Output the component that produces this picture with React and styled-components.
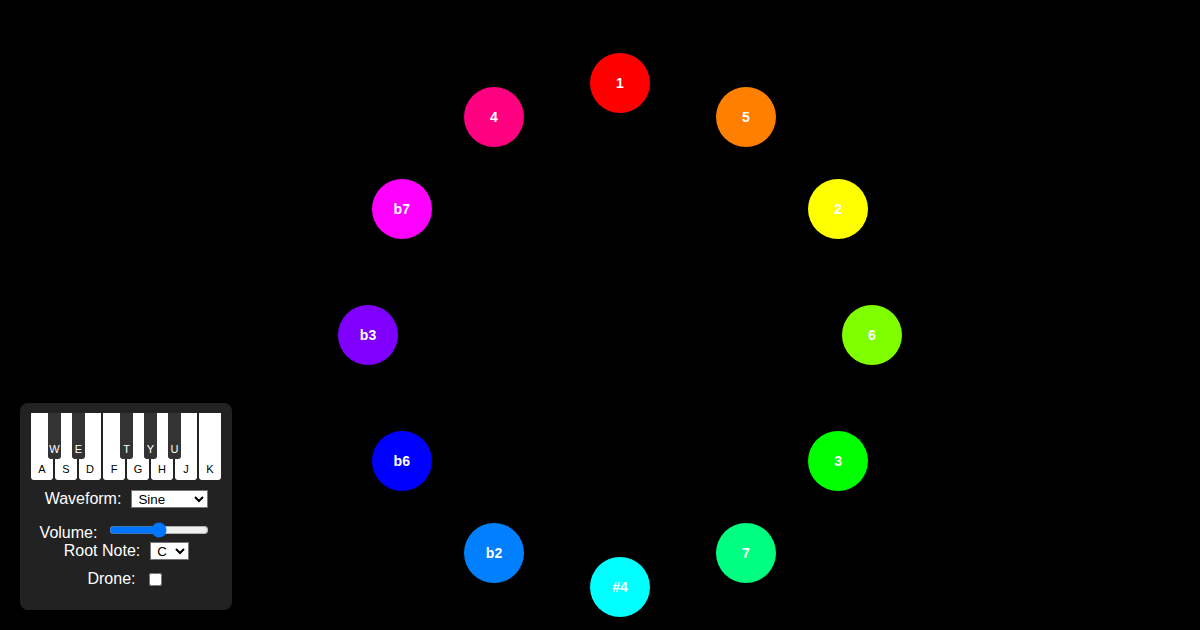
import React, { useState } from "react";
import styled, { createGlobalStyle } from "styled-components";

const GlobalStyle = createGlobalStyle`
  html, body {
    margin: 0;
    padding: 0;
    background: #000;
    font-family: "Liberation Sans", Arial, sans-serif;
    overflow: hidden;
  }
`;

const RADIUS = 252;
const SIZE = 60;

const degrees = [
  { label: "1", color: "#ff0000" },
  { label: "5", color: "#ff8000" },
  { label: "2", color: "#ffff00" },
  { label: "6", color: "#80ff00" },
  { label: "3", color: "#00ff00" },
  { label: "7", color: "#00ff80" },
  { label: "#4", color: "#00ffff" },
  { label: "b2", color: "#0080ff" },
  { label: "b6", color: "#0000ff" },
  { label: "b3", color: "#8000ff" },
  { label: "b7", color: "#ff00ff" },
  { label: "4", color: "#ff0080" },
];

const whiteKeys = ["A", "S", "D", "F", "G", "H", "J", "K"];
const blackKeys = [
  { label: "W", after: 0 },
  { label: "E", after: 1 },
  { label: "T", after: 3 },
  { label: "Y", after: 4 },
  { label: "U", after: 5 },
];

export default function App() {
  const [volume, setVolume] = useState(50);
  const [wave, setWave] = useState("sine");
  const [root, setRoot] = useState("C");
  const [drone, setDrone] = useState(false);

  return (
    <>
      <GlobalStyle />
      <Stage>
        <Wheel>
          {degrees.map((d, i) => {
            const a = (i * 30 * Math.PI) / 180;
            const x = RADIUS + RADIUS * Math.sin(a);
            const y = RADIUS - RADIUS * Math.cos(a);
            return (
              <Note key={d.label} $color={d.color} style={{ left: x, top: y }}>
                {d.label}
              </Note>
            );
          })}
        </Wheel>
      </Stage>

      <Panel>
        <Keyboard>
          {whiteKeys.map((k) => (
            <WhiteKey key={k}>{k}</WhiteKey>
          ))}
          {blackKeys.map((k) => (
            <BlackKey key={k.label} style={{ left: (k.after + 1) * 24 - 7 }}>
              {k.label}
            </BlackKey>
          ))}
        </Keyboard>

        <Row $top={10} $height={18}>
          <Label>Waveform:</Label>
          <Select $width={77} value={wave} onChange={(e) => setWave(e.target.value)}>
            <option value="sine">Sine</option>
            <option value="square">Square</option>
            <option value="sawtooth">Sawtooth</option>
            <option value="triangle">Triangle</option>
          </Select>
        </Row>

        <Row $top={6} $height={28} $align="flex-end" $gap={12} $shift={-2}>
          <Label>Volume:</Label>
          <Slider
            type="range"
            min="0"
            max="100"
            value={volume}
            onChange={(e) => setVolume(e.target.value)}
          />
        </Row>

        <Row $top={0} $height={18}>
          <Label>Root Note:</Label>
          <Select $width={39} value={root} onChange={(e) => setRoot(e.target.value)}>
            {["C", "C#", "D", "D#", "E", "F", "F#", "G", "G#", "A", "A#", "B"].map((n) => (
              <option key={n}>{n}</option>
            ))}
          </Select>
        </Row>

        <Row $top={10} $height={18} $gap={13} $shift={-2}>
          <Label>Drone:</Label>
          <Check type="checkbox" checked={drone} onChange={(e) => setDrone(e.target.checked)} />
        </Row>
      </Panel>
    </>
  );
}

const Stage = styled.div`
  width: 1200px;
  height: 630px;
  box-sizing: border-box;
  padding: 40px 0 0 40px;
  display: flex;
  align-items: center;
  justify-content: center;
`;

const Wheel = styled.div`
  position: relative;
  width: ${RADIUS * 2 + SIZE}px;
  height: ${RADIUS * 2 + SIZE}px;
`;

const Note = styled.div`
  position: absolute;
  width: ${SIZE}px;
  height: ${SIZE}px;
  border-radius: 50%;
  background: ${(p) => p.$color};
  color: #fff;
  font-size: 14px;
  font-weight: bold;
  display: flex;
  align-items: center;
  justify-content: center;
`;

const Panel = styled.div`
  position: fixed;
  left: 20px;
  bottom: 20px;
  width: 212px;
  box-sizing: border-box;
  padding: 10px 10px 22px 11px;
  background: #222;
  border-radius: 8px;
  color: #fff;
  display: flex;
  flex-direction: column;
`;

const Keyboard = styled.div`
  position: relative;
  display: flex;
  gap: 2px;
  width: 190px;
  height: 67px;
`;

const WhiteKey = styled.div`
  width: 22px;
  height: 67px;
  background: #fff;
  color: #000;
  border-radius: 0 0 3px 3px;
  font-size: 11px;
  display: flex;
  align-items: flex-end;
  justify-content: center;
  padding-bottom: 5px;
  box-sizing: border-box;
`;

const BlackKey = styled.div`
  position: absolute;
  top: 0;
  width: 13px;
  height: 46px;
  background: #333;
  color: #fff;
  border-radius: 0 0 3px 3px;
  font-size: 11px;
  display: flex;
  align-items: flex-end;
  justify-content: center;
  padding-bottom: 4px;
  box-sizing: border-box;
`;

const Row = styled.div`
  margin-top: ${(p) => p.$top}px;
  height: ${(p) => p.$height}px;
  display: flex;
  align-items: ${(p) => p.$align || "center"};
  justify-content: center;
  gap: ${(p) => p.$gap || 10}px;
  transform: translateX(${(p) => p.$shift || 0}px);
`;

const Label = styled.span`
  font-size: 16px;
  line-height: 18px;
  color: #fff;
`;

const Select = styled.select`
  width: ${(p) => p.$width}px;
  height: 18px;
  font-family: "Liberation Sans", Arial, sans-serif;
  font-size: 13.33px;
  background: #fff;
  color: #000;
  border: 1px solid #767676;
  border-radius: 0;
  padding: 0 2px;
  box-sizing: border-box;
`;

const Slider = styled.input`
  width: 100px;
  height: 16px;
  margin: 0 0 4px 0;
`;

const Check = styled.input`
  width: 13px;
  height: 13px;
  margin: 0;
`;
